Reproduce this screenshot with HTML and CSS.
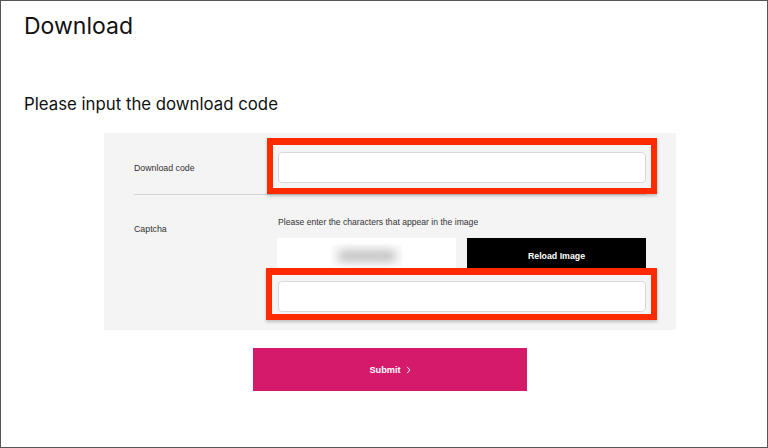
FILE: index.html
```html
<!DOCTYPE html>
<html lang="en">
<head>
<meta charset="utf-8">
<title>Download</title>
<link rel="stylesheet" href="styles.css">
</head>
<body>
<div class="frame">
  <h1 class="title">Download</h1>
  <h2 class="subtitle">Please input the download code</h2>
  <form class="panel">
    <div class="row row-code">
      <label class="label">Download code</label>
      <div class="field">
        <div class="input-wrap hl-a"><input class="input" type="text"></div>
      </div>
    </div>
    <div class="row row-captcha">
      <label class="label label-top">Captcha</label>
      <div class="field">
        <p class="hint">Please enter the characters that appear in the image</p>
        <div class="captcha-line">
          <div class="captcha-img"><div class="captcha-text"><span class="blob"></span></div></div>
          <button type="button" class="reload">Reload Image</button>
        </div>
        <div class="input-wrap hl-b"><input class="input" type="text"></div>
      </div>
    </div>
  </form>
  <button type="button" class="submit">Submit <svg class="chev" width="5" height="8" viewBox="0 0 5 8"><path d="M1 0.8 L4 4 L1 7.2" fill="none" stroke="#fff" stroke-width="1"/></svg></button>
</div>
</body>
</html>
```

FILE: styles.css
```css
* { box-sizing: border-box; }
html, body { margin: 0; padding: 0; background: #fff; }
body { font-family: Inter, "Liberation Sans", sans-serif; color: #111; }
.frame {
  width: 768px;
  height: 448px;
  border: 1px solid #565656;
  overflow: hidden;
}
.title {
  margin: 11px 0 0 23px;
  font-size: 23px;
  line-height: 28px;
  font-weight: 400;
  color: #111;
}
.subtitle {
  margin: 54px 0 0 23px;
  font-size: 16.8px;
  line-height: 20px;
  font-weight: 400;
  color: #111;
}
.panel {
  margin: 19px 0 0 103px;
  width: 572px;
  background: #f4f4f4;
  padding: 0 30px;
}
.row { display: flex; }
.row-code {
  padding: 19px 0 11px;
  border-bottom: 1px solid #d4d4d4;
  align-items: center;
}
.row-captcha { padding: 21px 0 18px; align-items: flex-start; }
.label {
  width: 144px;
  flex: none;
  font-family: "Liberation Sans", Arial, sans-serif;
  font-size: 8.8px;
  line-height: 12px;
  color: #333;
}
.label-top { padding-top: 7px; }
.field { flex: 1; min-width: 0; }
.input-wrap { position: relative; }
.input {
  display: block;
  width: 100%;
  height: 31px;
  margin: 0;
  border: 1px solid #d8d8d8;
  border-radius: 4px;
  background: #fff;
  outline: none;
}
.input-wrap::after {
  content: "";
  position: absolute;
  border: 6px solid #ff2a00;
  box-shadow: 0 2px 3px rgba(0,0,0,0.22);
  pointer-events: none;
}
.hl-a::after { top: -14px; bottom: -11px; left: -11px; right: -11px; border-width: 7px 6px 6px; }
.hl-b::after { top: -13px; bottom: -8px; left: -12px; right: -11px; border-width: 7px 6px 6px; }
.hint {
  margin: 0;
  font-family: "Liberation Sans", Arial, sans-serif;
  font-size: 8.6px;
  line-height: 12px;
  color: #333;
}
.captcha-line {
  display: flex;
  gap: 11px;
  margin: 10px 0 11px -1px;
  height: 32px;
}
.captcha-img {
  flex: 0 0 179px;
  background: #fff;
  display: flex;
  align-items: flex-start;
  justify-content: center;
  padding-top: 7px;
}
.captcha-text {
  width: 70px;
  height: 21px;
  background: #fafafa;
  display: flex;
  align-items: center;
  justify-content: center;
}
.blob {
  display: block;
  width: 58px;
  height: 12px;
  border-radius: 6px;
  background: #c4c4c4;
  filter: blur(4px);
}
.reload {
  flex: 1;
  border: 0;
  background: #000;
  color: #fff;
  font-family: "Liberation Sans", Arial, sans-serif;
  font-weight: 700;
  font-size: 8.8px;
  padding: 4px 0 0;
  margin: 0;
}
.submit {
  display: flex;
  align-items: center;
  justify-content: center;
  gap: 5px;
  margin: 18px 0 0 252px;
  width: 274px;
  height: 43px;
  border: 0;
  background: #d51a6b;
  color: #fff;
  font-family: "Liberation Sans", Arial, sans-serif;
  font-weight: 700;
  font-size: 9.2px;
  padding: 0;
}
.chev { display: block; }
```
